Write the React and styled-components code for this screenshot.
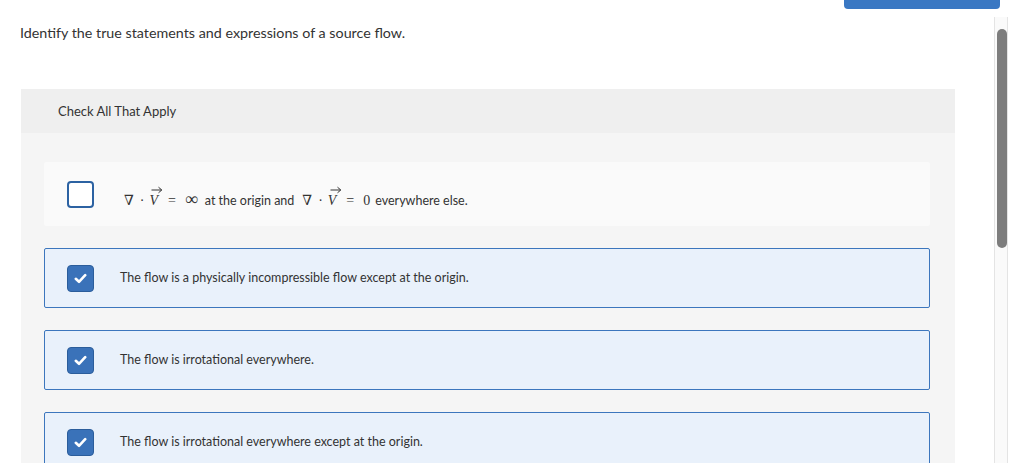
import React from "react";
import styled, { createGlobalStyle } from "styled-components";

const Global = createGlobalStyle`
  html, body { margin: 0; padding: 0; background: #fff; }
  body { font-family: Lato, "Open Sans", sans-serif; color: #2f2f2f; overflow: hidden; }
  * { box-sizing: border-box; }
`;

const Page = styled.div`
  width: 1024px;
  height: 463px;
  display: flex;
  flex-direction: column;
  overflow: hidden;
`;

const TopBar = styled.div`
  height: 17px;
  display: flex;
  justify-content: flex-end;
  padding-right: 24px;
  flex-shrink: 0;
`;

const TopButton = styled.button`
  width: 156px;
  height: 9px;
  border: none;
  border-radius: 0 0 4px 4px;
  background: #3a78c3;
  padding: 0;
`;

const Body = styled.div`
  flex: 1;
  display: flex;
  min-height: 0;
`;

const Content = styled.div`
  flex: 1;
  padding: 7px 39px 0 20px;
  display: flex;
  flex-direction: column;
  min-width: 0;
`;

const Track = styled.div`
  width: 14px;
  margin-right: 16px;
  background: #fafafa;
  border-left: 1px solid #e4e4e4;
  border-right: 1px solid #e4e4e4;
  padding: 12px 1px 0 2px;
  flex-shrink: 0;
`;

const Thumb = styled.div`
  width: 10px;
  height: 219px;
  border-radius: 5px;
  background: #7d7d7d;
`;

const Question = styled.p`
  margin: 0;
  font-size: 14.3px;
  line-height: 18px;
  color: #333;
`;

const Panel = styled.section`
  margin-top: 47px;
  margin-left: 1px;
  background: #f5f5f5;
`;

const PanelHeader = styled.div`
  height: 44px;
  background: #efefef;
  display: flex;
  align-items: center;
  padding-left: 37px;
  font-size: 13px;
  color: #333;
`;

const Options = styled.div`
  display: flex;
  flex-direction: column;
  gap: 22px;
  padding: 29px 25px 40px 23px;
`;

const Option = styled.label`
  display: flex;
  align-items: center;
  gap: 26px;
  min-height: ${(p) => (p.$tall ? "64px" : "60px")};
  padding: 0 22px;
  border: 1px solid ${(p) => (p.$checked ? "#3c76bd" : "transparent")};
  border-radius: 2px;
  background: ${(p) => (p.$checked ? "#e9f1fb" : "#fafafa")};
`;

const Box = styled.span`
  width: 27px;
  height: 27px;
  flex-shrink: 0;
  border-radius: 4px;
  border: ${(p) => (p.$checked ? "1px solid #2b5d9b" : "2px solid #2c62a2")};
  background: ${(p) => (p.$checked ? "#3a72b9" : "#fff")};
  display: flex;
  align-items: center;
  justify-content: center;
`;

const OptionText = styled.span`
  font-size: 12.5px;
  line-height: 16px;
  color: #333;
  padding-top: ${(p) => (p.$math ? "12px" : "0")};
  white-space: nowrap;
`;

const MathSym = styled.span`
  display: inline-block;
  font-family: "Liberation Serif", "DejaVu Serif", serif;
  font-size: ${(p) => p.$size || "14px"};
  line-height: 16px;
  color: #333;
  margin: ${(p) => p.$m || "0"};
`;

const VecWrap = styled.span`
  position: relative;
  display: inline-block;
  font-family: "Liberation Serif", serif;
  font-style: italic;
  font-size: 14px;
  line-height: 16px;
`;

const ArrowSvg = styled.svg`
  position: absolute;
  left: 2px;
  top: -7px;
`;

const Arrow = () => (
  <ArrowSvg width="12" height="8" viewBox="0 0 12 8">
    <path d="M0.5 4 H10.5 M7.5 1.2 L10.8 4 L7.5 6.8" stroke="#333" strokeWidth="1" fill="none" />
  </ArrowSvg>
);

const Vec = () => (
  <VecWrap>
    <Arrow />V
  </VecWrap>
);

const Check = () => (
  <svg width="13" height="11" viewBox="0 0 13 11">
    <path d="M1.8 5.8 L5 8.8 L11.2 2.2" stroke="#fff" strokeWidth="2.6" fill="none" strokeLinecap="round" strokeLinejoin="round" />
  </svg>
);

const Plain = styled.span`
  margin: 0 4px 0 5px;
`;

export default function App() {
  const items = [
    "The flow is a physically incompressible flow except at the origin.",
    "The flow is irrotational everywhere.",
    "The flow is irrotational everywhere except at the origin.",
  ];
  return (
    <Page>
      <Global />
      <TopBar>
        <TopButton aria-label="Submit" />
      </TopBar>
      <Body>
        <Content>
          <Question>Identify the true statements and expressions of a source flow.</Question>
          <Panel>
            <PanelHeader>Check All That Apply</PanelHeader>
            <Options>
              <Option $tall>
                <Box />
                <OptionText $math>
                  <MathSym $m="0 6px 0 4px">∇</MathSym>
                  <MathSym $m="0 5px 0 0">·</MathSym>
                  <Vec />
                  <MathSym $m="0 9px 0 10px">=</MathSym>
                  <MathSym $size="18px" $m="0 2px 0 0">∞</MathSym>
                  <Plain>at the origin and</Plain>
                  <MathSym $m="0 6px 0 4px">∇</MathSym>
                  <MathSym $m="0 5px 0 0">·</MathSym>
                  <Vec />
                  <MathSym $m="0 9px 0 10px">=</MathSym>
                  <MathSym $m="0 0 0 0">0</MathSym>
                  <Plain>everywhere else.</Plain>
                </OptionText>
              </Option>
              {items.map((t) => (
                <Option key={t} $checked>
                  <Box $checked>
                    <Check />
                  </Box>
                  <OptionText>{t}</OptionText>
                </Option>
              ))}
            </Options>
          </Panel>
        </Content>
        <Track>
          <Thumb />
        </Track>
      </Body>
    </Page>
  );
}
